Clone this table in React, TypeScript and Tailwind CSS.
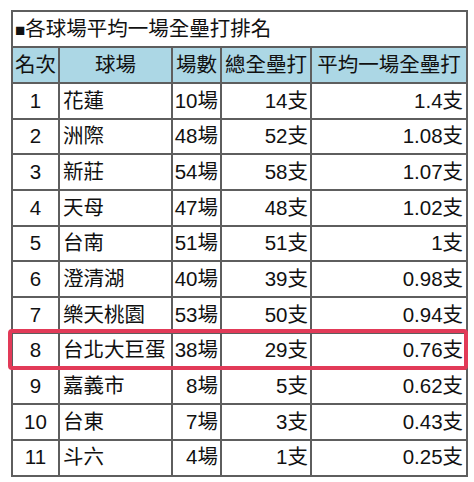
import React from "react";

const rows: [string, string, string, string, string][] = [
  ["1", "花蓮", "10場", "14支", "1.4支"],
  ["2", "洲際", "48場", "52支", "1.08支"],
  ["3", "新莊", "54場", "58支", "1.07支"],
  ["4", "天母", "47場", "48支", "1.02支"],
  ["5", "台南", "51場", "51支", "1支"],
  ["6", "澄清湖", "40場", "39支", "0.98支"],
  ["7", "樂天桃園", "53場", "50支", "0.94支"],
  ["8", "台北大巨蛋", "38場", "29支", "0.76支"],
  ["9", "嘉義市", "8場", "5支", "0.62支"],
  ["10", "台東", "7場", "3支", "0.43支"],
  ["11", "斗六", "4場", "1支", "0.25支"],
];

export default function App() {
  const cell = "border-2 border-[#5e5e5e] p-0 leading-none";
  return (
    <div
      className="w-[474px] h-[482px] bg-white text-[#111] text-[20.5px]"
      style={{ fontFamily: '"Liberation Sans", "Noto Sans CJK TC", sans-serif' }}
    >
      <div className="relative pt-[10px] pl-[11px]">
        <table className="border-collapse table-fixed w-[455px]">
          <colgroup>
            <col className="w-[47px]" />
            <col className="w-[113px]" />
            <col className="w-[49px]" />
            <col className="w-[90px]" />
            <col className="w-[156px]" />
          </colgroup>
          <tbody>
            <tr className="h-[36px]">
              <td colSpan={5} className={`${cell} pl-[2px] text-left whitespace-nowrap`}>
                <span className="text-[17px]">■</span>各球場平均一場全壘打排名
              </td>
            </tr>
            <tr className="h-[36px] bg-[#acd7e5]">
              <td className={`${cell} text-center whitespace-nowrap`}>名次</td>
              <td className={`${cell} text-center`}>球場</td>
              <td className={`${cell} text-center whitespace-nowrap`}>場數</td>
              <td className={`${cell} text-center whitespace-nowrap`}>總全壘打</td>
              <td className={`${cell} text-center whitespace-nowrap`}>平均一場全壘打</td>
            </tr>
            {rows.map((r) => (
              <tr key={r[0]} className="h-[35.7px]">
                <td className={`${cell} text-center`}>{r[0]}</td>
                <td className={`${cell} text-left pl-[3px] whitespace-nowrap`}>{r[1]}</td>
                <td className={`${cell} text-right pr-[2px] whitespace-nowrap`}>{r[2]}</td>
                <td className={`${cell} text-right pr-[2px] whitespace-nowrap`}>{r[3]}</td>
                <td className={`${cell} text-right pr-[3px] whitespace-nowrap`}>{r[4]}</td>
              </tr>
            ))}
          </tbody>
        </table>
        <div className="absolute left-[8px] top-[329px] w-[460px] h-[41px] border-[4px] border-[#e23a58] rounded-[4px]" />
      </div>
    </div>
  );
}
